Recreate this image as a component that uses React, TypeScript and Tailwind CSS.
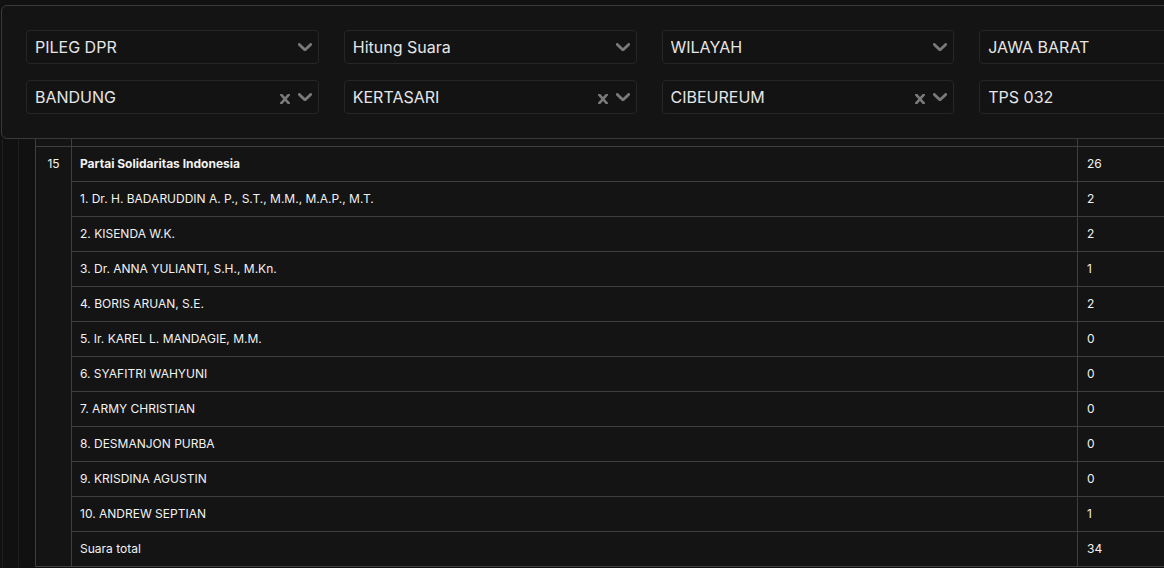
import React from "react"

const filters = [
  { label: "PILEG DPR", clear: false, chevron: true },
  { label: "Hitung Suara", clear: false, chevron: true },
  { label: "WILAYAH", clear: false, chevron: true },
  { label: "JAWA BARAT", clear: false, chevron: true },
  { label: "BANDUNG", clear: true, chevron: true },
  { label: "KERTASARI", clear: true, chevron: true },
  { label: "CIBEUREUM", clear: true, chevron: true },
  { label: "TPS 032", clear: true, chevron: true },
]

const rows = [
  { name: "Partai Solidaritas Indonesia", votes: 26, bold: true },
  { name: "1. Dr. H. BADARUDDIN A. P., S.T., M.M., M.A.P., M.T.", votes: 2 },
  { name: "2. KISENDA W.K.", votes: 2 },
  { name: "3. Dr. ANNA YULIANTI, S.H., M.Kn.", votes: 1 },
  { name: "4. BORIS ARUAN, S.E.", votes: 2 },
  { name: "5. Ir. KAREL L. MANDAGIE, M.M.", votes: 0 },
  { name: "6. SYAFITRI WAHYUNI", votes: 0 },
  { name: "7. ARMY CHRISTIAN", votes: 0 },
  { name: "8. DESMANJON PURBA", votes: 0 },
  { name: "9. KRISDINA AGUSTIN", votes: 0 },
  { name: "10. ANDREW SEPTIAN", votes: 1 },
  { name: "Suara total", votes: 34 },
]

function Chevron() {
  return (
    <svg viewBox="4.3 7.2 11.4 7.4" width="14" height="9" fill="#7a7a7a">
      <path d="M4.516 7.548c0.436-0.446 1.043-0.481 1.576 0l3.908 3.747 3.908-3.747c0.533-0.481 1.141-0.446 1.574 0 0.436 0.445 0.408 1.197 0 1.615-0.406 0.418-4.695 4.502-4.695 4.502-0.217 0.223-0.502 0.335-0.787 0.335s-0.57-0.112-0.789-0.335c0 0-4.287-4.084-4.695-4.502s-0.436-1.170 0-1.615z" />
    </svg>
  )
}

function Cross() {
  return (
    <svg viewBox="5.3 5.3 9.4 9.4" width="10" height="10" fill="#7a7a7a" className="mt-[4px]">
      <path d="M14.348 14.849c-0.469 0.469-1.229 0.469-1.697 0l-2.651-3.030-2.651 3.029c-0.469 0.469-1.229 0.469-1.697 0-0.469-0.469-0.469-1.229 0-1.697l2.758-3.150-2.759-3.152c-0.469-0.469-0.469-1.228 0-1.697s1.228-0.469 1.697 0l2.652 3.031 2.651-3.031c0.469-0.469 1.228-0.469 1.697 0s0.469 1.229 0 1.697l-2.758 3.152 2.758 3.150c0.469 0.469 0.469 1.229 0 1.698z" />
    </svg>
  )
}

function FilterSelect({ label, clear }: { label: string; clear: boolean }) {
  return (
    <div className="flex h-[34px] items-center rounded-[4px] border border-[#262626] bg-[#131313] pl-2 pr-[6px]">
      <span className="flex-1 truncate text-base text-[#e6e6e6]">{label}</span>
      {clear && (
        <div className="mr-2">
          <Cross />
        </div>
      )}
      <Chevron />
    </div>
  )
}

export default function App() {
  return (
    <div
      className="relative h-[568px] w-[1164px] overflow-hidden bg-[#111111]"
      style={{ fontFamily: "Inter, 'Noto Sans', sans-serif" }}
    >
      {/* table behind the sticky filter panel */}
      <div className="flex pl-[2px] pt-[139px]">
        <div className="w-[16px] border-l border-[#1f1f1f]" />
        <div className="w-[17px] border-l border-[#1f1f1f]" />
        <div className="flex-1 border-l border-[#3f3f3f] bg-[#141414] text-xs text-[#f2f2f2]">
          <div className="flex h-[8px] border-b border-[#3f3f3f]">
            <div className="w-[36px] border-r border-[#3f3f3f]" />
            <div className="w-[1006px] border-r border-[#3f3f3f]" />
            <div className="flex-1" />
          </div>
          <div className="flex">
            <div className="w-[36px] border-b border-r border-[#3f3f3f]">
              <div className="flex h-[34px] items-center justify-center">15</div>
            </div>
            <div className="flex flex-1 flex-col">
              {rows.map((r) => (
                <div key={r.name} className="flex h-[35px] border-b border-[#3f3f3f]">
                  <div
                    className={`flex w-[1006px] items-center border-r border-[#3f3f3f] pl-2 ${
                      r.bold ? "font-bold" : ""
                    }`}
                  >
                    {r.name}
                  </div>
                  <div className="flex flex-1 items-center pl-[9px]">{r.votes}</div>
                </div>
              ))}
            </div>
          </div>
        </div>
      </div>

      {/* sticky filter panel */}
      <div className="absolute left-[1px] top-[5px] w-[1296px] rounded-md border border-[#3a3a3a] bg-[#141414] p-6">
        <div className="grid grid-cols-4 gap-x-[25px] gap-y-4">
          {filters.map((f) => (
            <FilterSelect key={f.label} label={f.label} clear={f.clear} />
          ))}
        </div>
      </div>
    </div>
  )
}
